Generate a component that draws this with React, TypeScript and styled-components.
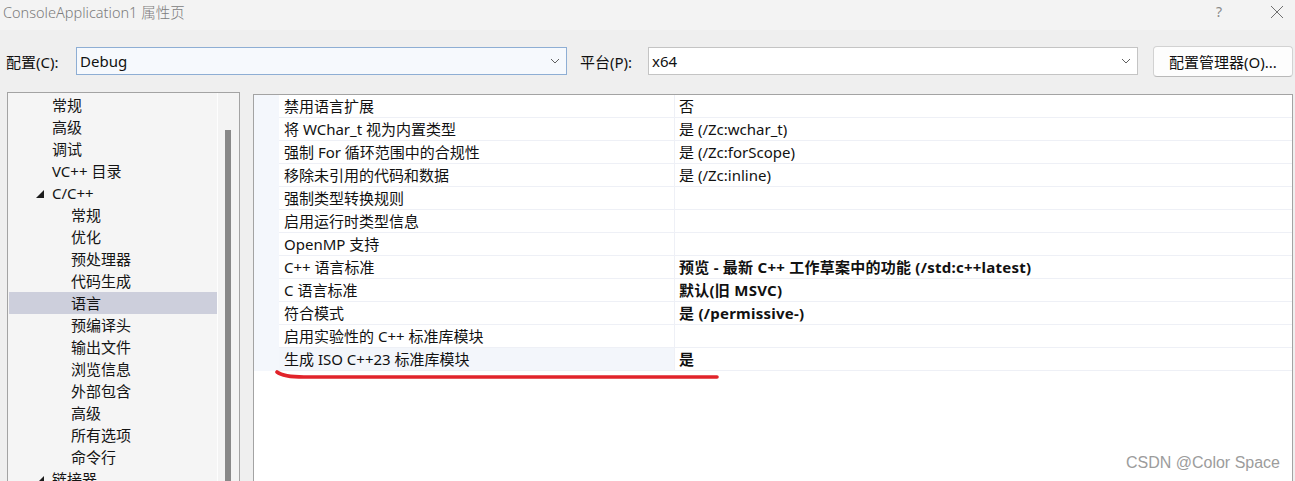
import styled, { createGlobalStyle } from 'styled-components';

const GlobalStyle = createGlobalStyle`
    html, body {
        margin: 0;
        padding: 0;
        background: #efefef;
    }
    body {
        font-family: "Noto Sans", "Noto Sans CJK SC", sans-serif;
        color: #1a1a1a;
    }
`;

type TreeEntry = { label: string; level: 1 | 2; expander?: boolean; selected?: boolean };

const treeItems: TreeEntry[] = [
    { label: '常规', level: 1 },
    { label: '高级', level: 1 },
    { label: '调试', level: 1 },
    { label: 'VC++ 目录', level: 1 },
    { label: 'C/C++', level: 1, expander: true },
    { label: '常规', level: 2 },
    { label: '优化', level: 2 },
    { label: '预处理器', level: 2 },
    { label: '代码生成', level: 2 },
    { label: '语言', level: 2, selected: true },
    { label: '预编译头', level: 2 },
    { label: '输出文件', level: 2 },
    { label: '浏览信息', level: 2 },
    { label: '外部包含', level: 2 },
    { label: '高级', level: 2 },
    { label: '所有选项', level: 2 },
    { label: '命令行', level: 2 },
    { label: '链接器', level: 1, expander: true },
];

type Prop = { name: string; value?: string; bold?: boolean; current?: boolean };

const props: Prop[] = [
    { name: '禁用语言扩展', value: '否' },
    { name: '将 WChar_t 视为内置类型', value: '是 (/Zc:wchar_t)' },
    { name: '强制 For 循环范围中的合规性', value: '是 (/Zc:forScope)' },
    { name: '移除未引用的代码和数据', value: '是 (/Zc:inline)' },
    { name: '强制类型转换规则' },
    { name: '启用运行时类型信息' },
    { name: 'OpenMP 支持' },
    { name: 'C++ 语言标准', value: '预览 - 最新 C++ 工作草案中的功能 (/std:c++latest)', bold: true },
    { name: 'C 语言标准', value: '默认(旧 MSVC)', bold: true },
    { name: '符合模式', value: '是 (/permissive-)', bold: true },
    { name: '启用实验性的 C++ 标准库模块' },
    { name: '生成 ISO C++23 标准库模块', value: '是', bold: true, current: true },
];

function Chevron() {
    return (
        <svg width="10" height="6" viewBox="0 0 10 6">
            <path d="M1 1 L5 5 L9 1" fill="none" stroke="#606060" strokeWidth="1" />
        </svg>
    );
}

function App() {
    return (
        <Window>
            <GlobalStyle />
            <TitleBar>
                <Title>ConsoleApplication1 属性页</Title>
                <TitleControls>
                    <HelpGlyph>?</HelpGlyph>
                    <svg width="14" height="14" viewBox="0 0 14 14">
                        <path d="M1 1 L13 13 M13 1 L1 13" stroke="#6f6f6f" strokeWidth="1" />
                    </svg>
                </TitleControls>
            </TitleBar>

            <Toolbar>
                <FieldLabel $width={76} $pad={6}>配置(C):</FieldLabel>
                <Combo $width={491} $focused>
                    <span>Debug</span>
                    <Chevron />
                </Combo>
                <FieldLabel $width={81} $pad={13}>平台(P):</FieldLabel>
                <Combo $width={490}>
                    <span>x64</span>
                    <Chevron />
                </Combo>
                <ManagerButton>配置管理器(O)...</ManagerButton>
            </Toolbar>

            <Main>
                <TreePanel>
                    <TreeList>
                        {treeItems.map((item, i) => (
                            <TreeRow key={i} $level={item.level} $selected={item.selected}>
                                {item.expander && <Expander />}
                                {item.label}
                            </TreeRow>
                        ))}
                    </TreeList>
                    <ScrollTrack>
                        <ScrollThumb />
                    </ScrollTrack>
                </TreePanel>

                <GridPanel>
                    {props.map((p, i) => (
                        <GridRow key={i}>
                            <Gutter />
                            <NameCell $current={p.current}>{p.name}</NameCell>
                            <ValueCell $bold={p.bold}>{p.value}</ValueCell>
                        </GridRow>
                    ))}
                </GridPanel>
            </Main>

            <Underline width="460" height="14" viewBox="0 0 460 14">
                <path
                    d="M3 3 C 8 7, 16 8, 30 8 L 443 8"
                    fill="none"
                    stroke="#e1232a"
                    strokeWidth="3.6"
                    strokeLinecap="round"
                />
            </Underline>

            <Watermark>CSDN @Color Space</Watermark>
        </Window>
    );
}

const Window = styled.div`
    position: relative;
    width: 1295px;
    height: 481px;
    overflow: hidden;
    background: #efefef;
    display: flex;
    flex-direction: column;
`;

const TitleBar = styled.div`
    display: flex;
    align-items: flex-start;
    justify-content: space-between;
    height: 30px;
    padding: 3px 0 0 3px;
    box-sizing: border-box;
    background: #f3f3f3;
`;

const Title = styled.div`
    font-family: "Noto Sans", "Noto Sans CJK SC", sans-serif;
    font-size: 14.5px;
    font-weight: 300;
    line-height: 18px;
    color: #7c7c7c;
`;

const TitleControls = styled.div`
    display: flex;
    align-items: center;
    gap: 48px;
    padding: 2px 11px 0 0;
`;

const HelpGlyph = styled.span`
    font-family: "Noto Sans", sans-serif;
    font-size: 14px;
    line-height: 14px;
    color: #8a8a8a;
`;

const Toolbar = styled.div`
    display: flex;
    align-items: center;
    height: 62px;
    font-size: 15px;
`;

const FieldLabel = styled.div<{ $width: number; $pad: number }>`
    width: ${(p) => p.$width}px;
    padding-left: ${(p) => p.$pad}px;
    box-sizing: border-box;
    color: #111;
`;

const Combo = styled.div<{ $width: number; $focused?: boolean }>`
    width: ${(p) => p.$width}px;
    height: 28px;
    box-sizing: border-box;
    display: flex;
    align-items: center;
    justify-content: space-between;
    padding: 0 6px 0 3px;
    border: 1px solid ${(p) => (p.$focused ? '#8eaed4' : '#c4c4c4')};
    background: ${(p) => (p.$focused ? '#f6f9fd' : '#ffffff')};
    color: #111;
`;

const ManagerButton = styled.div`
    margin-left: 15px;
    width: 140px;
    height: 31px;
    box-sizing: border-box;
    display: flex;
    align-items: center;
    justify-content: center;
    background: #fdfdfd;
    border: 1px solid #d2d2d2;
    border-bottom-color: #b9b9b9;
    border-radius: 4px;
    color: #111;
`;

const Main = styled.div`
    flex: 1;
    display: flex;
    align-items: flex-start;
    min-height: 0;
`;

const TreePanel = styled.div`
    margin-left: 7px;
    width: 233px;
    height: 400px;
    box-sizing: border-box;
    border: 1px solid #a3a3a3;
    background: #f5f5f5;
    display: flex;
`;

const TreeList = styled.div`
    width: 209px;
    padding: 1px 0 0 1px;
    box-sizing: border-box;
`;

const TreeRow = styled.div<{ $level: 1 | 2; $selected?: boolean }>`
    position: relative;
    height: 22px;
    line-height: 22px;
    font-size: 15px;
    padding-left: ${(p) => (p.$level === 1 ? 43 : 62)}px;
    background: ${(p) => (p.$selected ? '#cdcfdc' : 'transparent')};
    color: #141414;
    white-space: nowrap;
`;

const Expander = styled.span`
    position: absolute;
    left: 27px;
    top: 8px;
    width: 0;
    height: 0;
    border-left: 8px solid transparent;
    border-bottom: 8px solid #1c1c1c;
`;

const ScrollTrack = styled.div`
    flex: 1;
    border-left: 1px solid #fdfdfd;
    background: #f3f3f3;
`;

const ScrollThumb = styled.div`
    margin: 37px 0 0 7px;
    width: 6px;
    height: 400px;
    background: #888888;
`;

const GridPanel = styled.div`
    margin: 2px 0 0 13px;
    width: 1040px;
    height: 400px;
    box-sizing: border-box;
    border: 1px solid #a3a3a3;
    background: #ffffff;
`;

const GridRow = styled.div`
    display: grid;
    grid-template-columns: 25px 396px 1fr;
    height: 23px;
    font-size: 15px;
`;

const Gutter = styled.div`
    background: #f4f7fc;
`;

const NameCell = styled.div<{ $current?: boolean }>`
    padding-left: 5px;
    line-height: 22px;
    border-bottom: 1px solid #eef0f6;
    border-right: 1px solid #eef0f6;
    background: ${(p) => (p.$current ? '#f3f6fb' : '#ffffff')};
    color: #111;
    white-space: nowrap;
`;

const ValueCell = styled.div<{ $bold?: boolean }>`
    padding-left: 4px;
    line-height: 22px;
    border-bottom: 1px solid #eef0f6;
    font-weight: ${(p) => (p.$bold ? 700 : 400)};
    letter-spacing: ${(p) => (p.$bold ? '0.25px' : '0')};
    color: #111;
    white-space: nowrap;
`;

const Underline = styled.svg`
    position: absolute;
    left: 274px;
    top: 369px;
`;

const Watermark = styled.div`
    position: absolute;
    right: 15px;
    top: 453px;
    font-family: "Liberation Sans", Arial, sans-serif;
    font-size: 16px;
    line-height: 20px;
    color: #9c9c9c;
`;

export default App;
